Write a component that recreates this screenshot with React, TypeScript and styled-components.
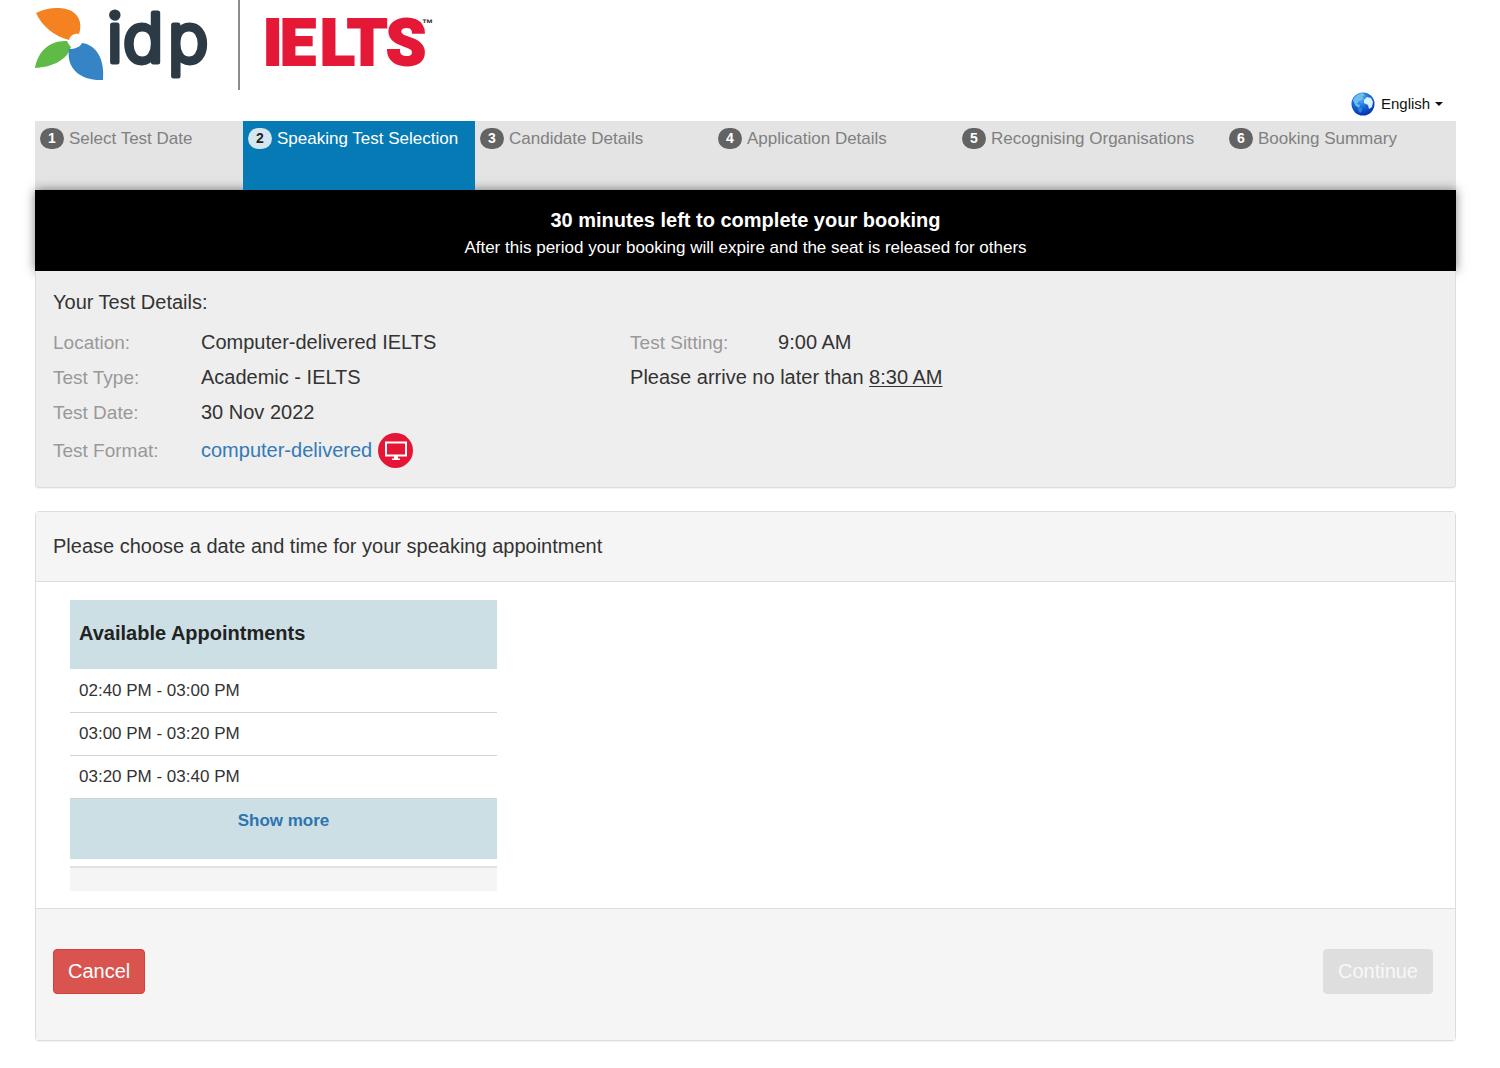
import React from "react";
import styled, { createGlobalStyle } from "styled-components";

const GlobalStyle = createGlobalStyle`
  *, *::before, *::after { box-sizing: border-box; }
  body {
    margin: 0;
    background: #fff;
    color: #333;
    font-family: "Liberation Sans", Arial, sans-serif;
    font-size: 20px;
    line-height: 25px;
  }
  button, select { font-family: inherit; }
`;

const Page = styled.div`
  padding: 0 44px 27px 35px;
`;

const Header = styled.header`
  display: flex;
  flex-direction: column;
`;

const Brand = styled.div`
  display: flex;
  height: 90px;
`;

const IdpLogo = styled.svg`
  width: 203px;
  height: 90px;
`;

const IeltsLogo = styled.svg`
  width: 200px;
  height: 90px;
  border-left: 2px solid #8c8c8c;
`;

const LanguageBar = styled.div`
  display: flex;
  justify-content: flex-end;
  align-items: center;
  gap: 6px;
  height: 31px;
  padding: 0 13px 3px 0;
`;

const LanguageField = styled.label`
  display: grid;
  grid-template-columns: 52px 10px;
  align-items: center;
`;

const LanguageSelect = styled.select`
  grid-area: 1 / 1 / 2 / 3;
  appearance: none;
  border: 0;
  padding: 0;
  background: transparent;
  color: #111;
  font-size: 15px;
  line-height: 20px;
`;

const Caret = styled.span`
  grid-area: 1 / 2;
  justify-self: end;
  border: 4px solid transparent;
  border-top-color: #111;
  border-bottom: 0;
  pointer-events: none;
`;

const Steps = styled.ol`
  display: grid;
  grid-template-columns: 208fr 232fr 238fr 244fr 267fr 232fr;
  margin: 0;
  padding: 0;
  height: 69px;
  list-style: none;
  background: #e4e4e4;
`;

const Step = styled.li<{ $active?: boolean }>`
  position: relative;
  z-index: ${(p) => (p.$active ? 2 : 0)};
  display: flex;
  align-items: flex-start;
  gap: 5px;
  padding: 7px 5px 0;
  white-space: nowrap;
  color: ${(p) => (p.$active ? "#fff" : "#808080")};
  background: ${(p) => (p.$active ? "#057ab4" : "transparent")};
  font-size: 17px;
  line-height: 22px;
`;

const StepNumber = styled.span<{ $active?: boolean }>`
  width: 24px;
  border-radius: 11px;
  text-align: center;
  font-size: 14px;
  font-weight: 700;
  line-height: 21px;
  color: ${(p) => (p.$active ? "#222" : "#fff")};
  background: ${(p) => (p.$active ? "#d5e6ef" : "#636363")};
`;

const Notice = styled.section`
  position: relative;
  z-index: 1;
  padding: 17px 0 9px;
  text-align: center;
  color: #fff;
  background: #000;
  box-shadow: 0 0 10px rgba(0, 0, 0, 0.5);
`;

const NoticeTitle = styled.h1`
  margin: 0;
  font-size: 20px;
  line-height: 27px;
`;

const NoticeText = styled.p`
  margin: 0;
  font-size: 17px;
  line-height: 28px;
`;

const Details = styled.section`
  position: relative;
  z-index: 1;
  padding: 19px 17px 17px;
  border: 1px solid #ddd;
  border-top: 0;
  border-radius: 0 0 4px 4px;
  background: #eee;
  box-shadow: 0 1px 1px rgba(0, 0, 0, 0.05);
`;

const SectionTitle = styled.h2`
  margin: 0;
  font-size: 20px;
  font-weight: 400;
  line-height: 25px;
`;

const DetailColumns = styled.div`
  display: grid;
  grid-template-columns: 5fr 7fr;
  align-items: start;
  margin-top: 10px;
`;

const Facts = styled.dl`
  display: grid;
  grid-template-columns: 148px 1fr;
  align-items: center;
  margin: 0;
  line-height: 35px;
`;

const FactName = styled.dt`
  color: #999;
  font-size: 19px;
`;

const FactValue = styled.dd`
  display: flex;
  align-items: center;
  gap: 6px;
  min-height: 35px;
  margin: 0;
`;

const FormatValue = styled(FactValue)`
  min-height: 40px;
`;

const FormatLink = styled.a`
  color: #337ab7;
  text-decoration: none;
`;

const Arrival = styled.p`
  margin: 0;
  line-height: 35px;
`;

const Underlined = styled.u`
  text-underline-offset: 2px;
  text-decoration-thickness: 1px;
`;

const Panel = styled.section`
  margin-top: 23px;
  border: 1px solid #ddd;
  border-radius: 4px;
  background: #fff;
  box-shadow: 0 1px 1px rgba(0, 0, 0, 0.05);
`;

const PanelHeader = styled.header`
  padding: 22px 17px;
  border-bottom: 1px solid #ddd;
  background: #f5f5f5;
`;

const PanelBody = styled.div`
  padding: 18px 34px 17px;
`;

const PanelFooter = styled.footer`
  display: flex;
  justify-content: space-between;
  padding: 40px 22px 46px 17px;
  border-top: 1px solid #ddd;
  background: #f5f5f5;
`;

const Appointments = styled.div`
  width: 100%;
  max-width: 427px;
`;

const SlotTable = styled.table`
  width: 100%;
  border-collapse: collapse;
`;

const SlotHeading = styled.th`
  height: 69px;
  padding: 0 9px 3px;
  text-align: left;
  background: #ccdfe5;
  color: #222;
`;

const Slot = styled.td`
  height: 43px;
  padding: 0 9px;
  border-bottom: 1px solid #d0d4d6;
  font-size: 17px;
`;

const ShowMore = styled.button`
  display: block;
  width: 100%;
  height: 60px;
  padding: 0 0 16px;
  border: 0;
  background: #ccdfe5;
  color: #2e74ae;
  font-size: 17px;
  font-weight: 700;
`;

const TableFoot = styled.div`
  height: 25px;
  margin-top: 7px;
  border-top: 2px solid #e2e2e2;
  background: #f5f5f5;
`;

const Button = styled.button<{ $kind: "danger" | "muted" }>`
  height: 45px;
  padding: 0 14px;
  border: 1px solid ${(p) => (p.$kind === "danger" ? "#d43f3a" : "#dedede")};
  border-radius: 4px;
  background: ${(p) => (p.$kind === "danger" ? "#d9534f" : "#dedede")};
  color: ${(p) => (p.$kind === "danger" ? "#fff" : "#f8f8f8")};
  font-size: 20px;
`;

const steps = [
  "Select Test Date",
  "Speaking Test Selection",
  "Candidate Details",
  "Application Details",
  "Recognising Organisations",
  "Booking Summary",
];

const slots = ["02:40 PM - 03:00 PM", "03:00 PM - 03:20 PM", "03:20 PM - 03:40 PM"];

function Idp() {
  return (
    <IdpLogo viewBox="0 0 203 90" role="img" aria-label="idp">
      <path d="M1 13C14 6 31 7 38 12C45 17 47 25 44 34C39 33 35 36 34 40C19 36 7 26 1 13Z" fill="#f58220" />
      <path d="M0 68C3 51 15 40 32 41C33 43 34 45 36 47C32 60 18 67 0 68Z" fill="#5fba46" />
      <path d="M34 49C40 49 45 47 47 43C62 45 70 60 68 80C46 81 31 69 34 49Z" fill="#3585c6" />
      <text
        x="72 88 133"
        y="62"
        fontFamily="Inter, sans-serif"
        fontWeight="300"
        fontSize="67"
        fill="#2c3a45"
        stroke="#2c3a45"
        strokeWidth="5"
        strokeLinejoin="round"
      >
        idp
      </text>
    </IdpLogo>
  );
}

function Ielts() {
  return (
    <IeltsLogo viewBox="0 0 198 90" role="img" aria-label="IELTS">
      <text
        x="23 40 80 107 146"
        y="65"
        fontFamily="Roboto, sans-serif"
        fontWeight="900"
        fontSize="64"
        fill="#e51837"
        stroke="#e51837"
        strokeWidth="2"
      >
        IELTS
        <tspan
          x="182"
          y="27"
          fontFamily="Liberation Sans, sans-serif"
          fontSize="11"
          fill="#222"
          stroke="none"
        >
          ™
        </tspan>
      </text>
    </IeltsLogo>
  );
}

function Globe() {
  return (
    <svg width="24" height="24" viewBox="0 0 24 24" aria-hidden="true">
      <defs>
        <radialGradient id="sea" cx="0.4" cy="0.25" r="0.8">
          <stop offset="0" stopColor="#5cb8f2" />
          <stop offset="0.5" stopColor="#1669d6" />
          <stop offset="1" stopColor="#0428a8" />
        </radialGradient>
      </defs>
      <circle cx="12" cy="12" r="11.5" fill="url(#sea)" />
      <path d="M2 8C4 4 7 2 11 1L14 3L11 5L12 7L8 9L6 12L9 13L8 16L4 13Z" fill="#6fbdf0" />
      <path d="M13 8L16 5L20 6L22 10L21 15L18 17L17 13L13 11Z" fill="#d8f1fc" />
      <path d="M8 15L11 16L11 19L9 21L7 18Z" fill="#2a83dc" />
    </svg>
  );
}

function ComputerBadge() {
  return (
    <svg width="35" height="35" viewBox="0 0 35 35" aria-hidden="true">
      <circle cx="17.5" cy="17.5" r="17.5" fill="#e51635" />
      <rect x="8" y="9.5" width="20" height="13" fill="none" stroke="#fff" strokeWidth="2" />
      <path d="M16 23H20V25.500H22V27H14V25.500H16Z" fill="#fff" />
    </svg>
  );
}

export default function App() {
  return (
    <>
      <GlobalStyle />
      <Page>
        <Header>
          <Brand>
            <Idp />
            <Ielts />
          </Brand>
          <LanguageBar>
            <Globe />
            <LanguageField>
              <LanguageSelect aria-label="Language" defaultValue="en">
                <option value="en">English</option>
              </LanguageSelect>
              <Caret />
            </LanguageField>
          </LanguageBar>
        </Header>
        <Steps>
          {steps.map((name, i) => (
            <Step key={name} $active={i === 1} aria-current={i === 1 ? "step" : undefined}>
              <StepNumber $active={i === 1}>{i + 1}</StepNumber>
              {name}
            </Step>
          ))}
        </Steps>
        <Notice>
          <NoticeTitle>30 minutes left to complete your booking</NoticeTitle>
          <NoticeText>After this period your booking will expire and the seat is released for others</NoticeText>
        </Notice>
        <Details>
          <SectionTitle>Your Test Details:</SectionTitle>
          <DetailColumns>
            <Facts>
              <FactName>Location:</FactName>
              <FactValue>Computer-delivered IELTS</FactValue>
              <FactName>Test Type:</FactName>
              <FactValue>Academic - IELTS</FactValue>
              <FactName>Test Date:</FactName>
              <FactValue>30 Nov 2022</FactValue>
              <FactName>Test Format:</FactName>
              <FormatValue>
                <FormatLink href="#format">computer-delivered</FormatLink>
                <ComputerBadge />
              </FormatValue>
            </Facts>
            <div>
              <Facts>
                <FactName>Test Sitting:</FactName>
                <FactValue>9:00 AM</FactValue>
              </Facts>
              <Arrival>
                Please arrive no later than <Underlined>8:30 AM</Underlined>
              </Arrival>
            </div>
          </DetailColumns>
        </Details>
        <Panel>
          <PanelHeader>
            <SectionTitle>Please choose a date and time for your speaking appointment</SectionTitle>
          </PanelHeader>
          <PanelBody>
            <Appointments>
              <SlotTable>
                <thead>
                  <tr>
                    <SlotHeading scope="col">Available Appointments</SlotHeading>
                  </tr>
                </thead>
                <tbody>
                  {slots.map((slot) => (
                    <tr key={slot}>
                      <Slot>{slot}</Slot>
                    </tr>
                  ))}
                </tbody>
              </SlotTable>
              <ShowMore type="button">Show more</ShowMore>
              <TableFoot />
            </Appointments>
          </PanelBody>
          <PanelFooter>
            <Button type="button" $kind="danger">
              Cancel
            </Button>
            <Button type="button" $kind="muted" disabled>
              Continue
            </Button>
          </PanelFooter>
        </Panel>
      </Page>
    </>
  );
}
